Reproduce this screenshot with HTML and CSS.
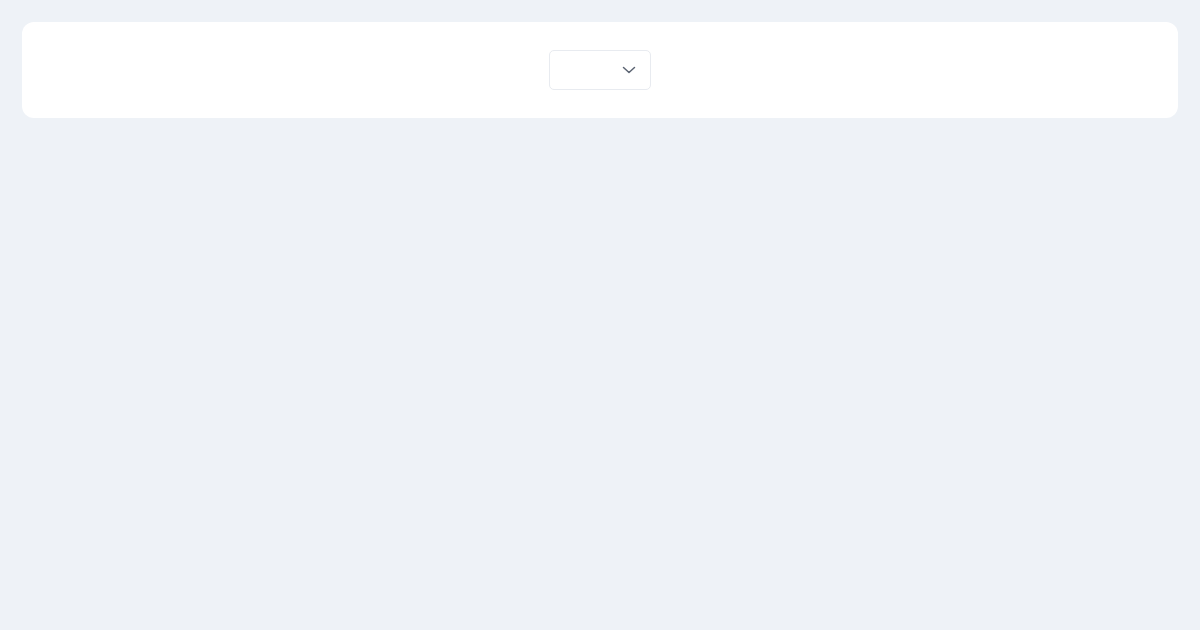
FILE: index.html
```html
<!DOCTYPE html>
<html>
<head>
    <meta charset="UTF-8" />
    <meta name="viewport" content="width=device-width, initial-scale=1.0" />
    <title>Select</title>
    <link rel="stylesheet" href="styles.css">
</head>
<body>
    <div class="card">
        <div class="select-box">
            <span class="select-value"></span>
            <svg class="chevron" width="14" height="8" viewBox="0 0 14 8" fill="none">
                <path d="M1.5 1.5l5.5 5 5.5-5" stroke="#5b6472" stroke-width="1.5" stroke-linecap="round" stroke-linejoin="round"/>
            </svg>
        </div>
    </div>
</body>
</html>
```

FILE: styles.css
```css
* {
    margin: 0;
    padding: 0;
    box-sizing: border-box;
    font-family: "Inter", sans-serif;
}

body {
    background: #eef2f7;
    padding: 22px;
    min-height: 100vh;
}

.card {
    background: #ffffff;
    border-radius: 12px;
    padding: 28px 0;
    display: flex;
    justify-content: center;
}

.select-box {
    width: 102px;
    height: 40px;
    border: 1px solid #e8ebf0;
    border-radius: 5px;
    display: flex;
    align-items: center;
    justify-content: space-between;
    padding: 0 14px 0 12px;
}

.chevron {
    display: block;
}
```
